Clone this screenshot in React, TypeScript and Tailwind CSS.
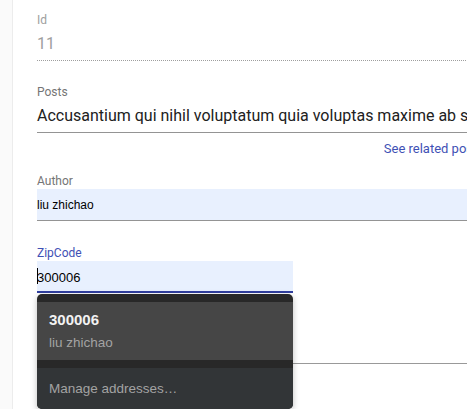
export default function App() {
  return (
    <div className="flex h-[409px] w-[467px] overflow-hidden bg-white font-['Roboto',sans-serif]">
      <div className="w-[13px] shrink-0 border-r border-[#ececec] bg-[#fafafa]" />
      <div className="relative shrink-0 pl-[24px]">
        <div className="flex w-[447px] flex-col">
          {/* Id */}
          <div className="mt-[12px] h-[16px] text-[12px] leading-[16px] text-[#9e9e9e]">Id</div>
          <div className="mt-[6px] border-b border-dotted border-[#9e9e9e] pb-[6px]">
            <div className="h-[20px] text-[16px] leading-[20px] text-[#9e9e9e]">11</div>
          </div>

          {/* Posts */}
          <div className="mt-[23px] h-[16px] text-[12px] leading-[16px] text-[#757575]">Posts</div>
          <div className="border-b border-[#949494] pb-[7px] pt-[7px]">
            <div className="h-[18px] whitespace-nowrap text-[16px] leading-[18px] text-[#212121]">
              Accusantium qui nihil voluptatum quia voluptas maxime ab saepe
            </div>
          </div>
          <div className="mt-[8px] flex h-[16px] justify-end">
            <span className="whitespace-nowrap text-[13px] leading-[16px] text-[#3f51b5]">See related posts</span>
          </div>

          {/* Author */}
          <div className="mt-[16px] h-[16px] text-[12px] leading-[16px] text-[#757575]">Author</div>
          <div className="box-content h-[31px] w-[460px] border-b border-[#949494] bg-[#e8f0fe]">
            <div className="h-[31px] font-['Liberation_Sans',Arial,sans-serif] text-[12px] leading-[33px] text-black">
              liu zhichao
            </div>
          </div>

          {/* ZipCode */}
          <div className="mt-[24px] h-[16px] text-[12px] leading-[16px] text-[#3f51b5]">ZipCode</div>
          <div className="relative box-content h-[30px] w-[256px] border-b-2 border-[#303f9f] bg-[#e8f0fe]">
            <div className="h-[30px] font-['Liberation_Sans',Arial,sans-serif] text-[13px] leading-[34px] text-black">
              300006
            </div>
            <span className="absolute left-0 top-[7px] h-[16px] w-px bg-black" />
          </div>

          {/* next field underline */}
          <div className="box-content h-[70px] w-[460px] border-b border-[#999999]" />
        </div>

        {/* Autofill dropdown */}
        <div className="absolute left-[24px] top-[294px] flex h-[115px] w-[256px] flex-col overflow-hidden rounded-[5px] bg-[#282828] font-['Liberation_Sans',Arial,sans-serif] shadow-[0_2px_6px_rgba(0,0,0,0.25)]">
          <div className="h-[8px] shrink-0" />
          <div className="h-[58px] shrink-0 bg-[#464646] px-[12px] pt-[9px]">
            <div className="h-[18px] text-[15px] font-bold leading-[18px] text-[#f2f2f2]">300006</div>
            <div className="mt-[6px] h-[16px] text-[13.5px] leading-[16px] text-[#a3a3a3]">liu zhichao</div>
          </div>
          <div className="h-[8px] shrink-0" />
          <div className="flex-1 bg-[#323537] px-[12px] pt-[13px]">
            <div className="h-[16px] text-[13.5px] leading-[16px] text-[#a3a3a3]">Manage addresses…</div>
          </div>
        </div>
      </div>
    </div>
  );
}
